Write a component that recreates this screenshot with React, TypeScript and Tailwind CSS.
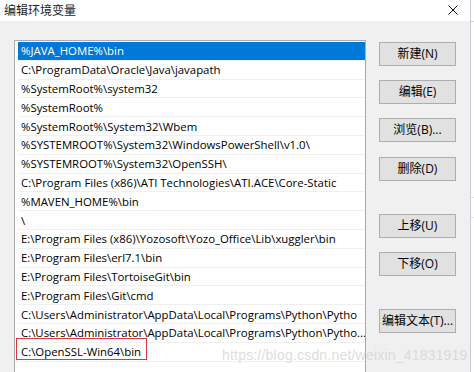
const paths = [
  "%JAVA_HOME%\\bin",
  "C:\\ProgramData\\Oracle\\Java\\javapath",
  "%SystemRoot%\\system32",
  "%SystemRoot%",
  "%SystemRoot%\\System32\\Wbem",
  "%SYSTEMROOT%\\System32\\WindowsPowerShell\\v1.0\\",
  "%SYSTEMROOT%\\System32\\OpenSSH\\",
  "C:\\Program Files (x86)\\ATI Technologies\\ATI.ACE\\Core-Static",
  "%MAVEN_HOME%\\bin",
  "\\",
  "E:\\Program Files (x86)\\Yozosoft\\Yozo_Office\\Lib\\xuggler\\bin",
  "E:\\Program Files\\erl7.1\\bin",
  "E:\\Program Files\\TortoiseGit\\bin",
  "E:\\Program Files\\Git\\cmd",
  "C:\\Users\\Administrator\\AppData\\Local\\Programs\\Python\\Pytho",
  "C:\\Users\\Administrator\\AppData\\Local\\Programs\\Python\\Pytho...",
  "C:\\OpenSSL-Win64\\bin",
];

// spacing above each button, matches the dialog's grouping
const buttons: { label: string; mt: string }[] = [
  { label: "新建(N)", mt: "mt-0" },
  { label: "编辑(E)", mt: "mt-[14px]" },
  { label: "浏览(B)...", mt: "mt-[14px]" },
  { label: "删除(D)", mt: "mt-[15px]" },
  { label: "上移(U)", mt: "mt-[33px]" },
  { label: "下移(O)", mt: "mt-[14px]" },
  { label: "编辑文本(T)...", mt: "mt-[33px]" },
];

export default function App() {
  return (
    <div className="relative flex w-[474px] h-[372px] overflow-hidden bg-[#f0f0f0] font-['Open_Sans','Noto_Sans_CJK_SC',sans-serif] text-[12px] text-black">
      {/* Dialog */}
      <div className="flex flex-col w-[470px] h-full">
        {/* Title bar */}
        <div className="flex items-center justify-between h-[21px] bg-white pl-[4px] pr-[12px]">
          <span className="text-[12px] text-[#222] leading-none">编辑环境变量</span>
          <svg width="10" height="10" viewBox="0 0 10 10" className="mt-[-1px]">
            <path d="M0.5 0.5 L9.5 9.5 M9.5 0.5 L0.5 9.5" stroke="#111" strokeWidth="1" />
          </svg>
        </div>

        {/* Body */}
        <div className="flex flex-1 pl-[14px] pt-[19px] bg-[#f0f0f0]">
          {/* Path list */}
          <div className="w-[352px] flex-none bg-white border border-[#a9abb3] border-b-0 pl-[3px] pt-[1px] overflow-hidden">
            {paths.map((p, i) => (
              <div
                key={i}
                className={`h-[18.8px] flex items-center px-[3px] text-[11.4px] whitespace-nowrap overflow-hidden border-b border-[#f0f0f0] ${
                  i === 0 ? "bg-[#0078d7] text-white" : "text-black"
                }`}
              >
                {p}
              </div>
            ))}
          </div>

          {/* Buttons */}
          <div className="flex flex-col ml-[13px] pt-[2px]">
            {buttons.map((b) => (
              <button
                key={b.label}
                className={`${b.mt} w-[77px] h-[24px] bg-[#e1e1e1] border border-[#adadad] text-[12px] text-black leading-none`}
              >
                {b.label}
              </button>
            ))}
          </div>
        </div>
      </div>

      {/* Edge of the window behind */}
      <div className="flex-1 border-l border-[#c5ccd6] bg-white flex flex-col">
        <div className="h-[22px] border-b border-[#c9d6e6]" />
        <div className="h-[176px] border-b border-[#dfe5ec]" />
        <div className="h-[20px] border-b border-[#dfe5ec]" />
      </div>

      {/* Annotation box */}
      <div className="absolute left-[16px] top-[338px] w-[131px] h-[22px] border border-[#e0363c]" />

      {/* Watermark */}
      <div className="absolute left-[222px] top-[345px] text-[14px] font-['Liberation_Sans',sans-serif] text-[#d4d4d4]/80 tracking-[0.2px] whitespace-nowrap">
        https://blog.csdn.net/weixin_41831919
      </div>
    </div>
  );
}
